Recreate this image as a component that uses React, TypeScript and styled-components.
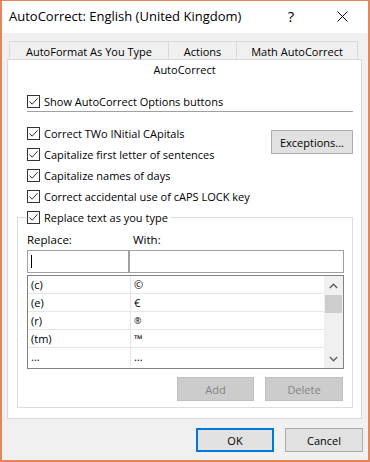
import React from 'react';
import styled, { createGlobalStyle } from 'styled-components';

const GlobalStyle = createGlobalStyle`
  html, body {
    margin: 0;
    padding: 0;
    background: #f0f0f0;
  }
  body {
    font-family: "Open Sans", "Noto Sans", sans-serif;
    font-size: 11px;
    color: #000;
  }
`;

const options = [
  'Correct TWo INitial CApitals',
  'Capitalize first letter of sentences',
  'Capitalize names of days',
  'Correct accidental use of cAPS LOCK key',
];

const entries: [string, string, boolean?][] = [
  ['(c)', '©'],
  ['(e)', '€'],
  ['(r)', '®', true],
  ['(tm)', '™'],
  ['...', '…'],
];

const CheckBox: React.FC<{ label: string }> = ({ label }) => (
  <CheckRow>
    <Box>
      <svg width="11" height="11" viewBox="0 0 11 11">
        <path d="M1.5 5.5 L4.2 8.2 L9.6 2.2" fill="none" stroke="#333" strokeWidth="1" />
      </svg>
    </Box>
    <span>{label}</span>
  </CheckRow>
);

const App: React.FC = () => {
  return (
    <>
      <GlobalStyle />
      <Window>
        <TitleBar>
          <Title>AutoCorrect: English (United Kingdom)</Title>
          <HelpButton>?</HelpButton>
          <CloseButton>
            <svg width="11" height="11" viewBox="0 0 11 11">
              <path d="M0.5 0.5 L10.5 10.5 M10.5 0.5 L0.5 10.5" stroke="#000" strokeWidth="1" />
            </svg>
          </CloseButton>
        </TitleBar>

        <Body>
          <TabStrip>
            <Tab width={160}>AutoFormat As You Type</Tab>
            <Tab width={68}>Actions</Tab>
            <Tab width={121}>Math AutoCorrect</Tab>
          </TabStrip>

          <TabPage>
            <ActiveTab>AutoCorrect</ActiveTab>

            <Options>
              <CheckBox label="Show AutoCorrect Options buttons" />
              <Separator />
              <OptionGrid>
                <div>
                  {options.map(o => (
                    <CheckBox key={o} label={o} />
                  ))}
                </div>
                <ExceptionsButton>Exceptions...</ExceptionsButton>
              </OptionGrid>
            </Options>

            <GroupBox>
              <Legend>
                <CheckBox label="Replace text as you type" />
              </Legend>
              <LabelRow>
                <FieldLabel width={106}>Replace:</FieldLabel>
                <FieldLabel>With:</FieldLabel>
              </LabelRow>
              <InputRow>
                <TextInput width={102}>
                  <Caret />
                </TextInput>
                <TextInput width={215} />
              </InputRow>

              <ListBox>
                <ListRows>
                  {entries.map(([from, to, small], i) => (
                    <ListRow key={from} last={i === entries.length - 1}>
                      <Cell>{from}</Cell>
                      <Cell divider small={small}>{to}</Cell>
                    </ListRow>
                  ))}
                </ListRows>
                <ScrollBar>
                  <ScrollArrow>
                    <svg width="9" height="6" viewBox="0 0 9 6">
                      <path d="M0.8 5 L4.5 1.3 L8.2 5" fill="none" stroke="#606060" strokeWidth="1.4" />
                    </svg>
                  </ScrollArrow>
                  <Thumb />
                  <ScrollTrack />
                  <ScrollArrow>
                    <svg width="9" height="6" viewBox="0 0 9 6">
                      <path d="M0.8 1 L4.5 4.7 L8.2 1" fill="none" stroke="#606060" strokeWidth="1.4" />
                    </svg>
                  </ScrollArrow>
                </ScrollBar>
              </ListBox>

              <ListButtons>
                <Button width={77} disabled>Add</Button>
                <Button width={78} disabled>Delete</Button>
              </ListButtons>
            </GroupBox>
          </TabPage>

          <Footer>
            <Button width={78} primary>OK</Button>
            <Button width={78}>Cancel</Button>
          </Footer>
        </Body>
      </Window>
    </>
  );
};

export default App;

const Window = styled.div`
  width: 370px;
  height: 462px;
  box-sizing: border-box;
  border: 2px solid #e3865a;
  border-top-width: 1px;
  background: #f0f0f0;
  display: flex;
  flex-direction: column;
`;

const TitleBar = styled.div`
  height: 32px;
  background: #fff;
  display: flex;
  align-items: center;
  padding-left: 7px;
  flex-shrink: 0;
`;

const Title = styled.div`
  flex: 1;
  font-size: 13px;
  padding-bottom: 2px;
`;

const HelpButton = styled.div`
  width: 50px;
  text-align: center;
  font-size: 15px;
  padding-bottom: 2px;
`;

const CloseButton = styled.div`
  width: 52px;
  display: flex;
  justify-content: center;
  align-items: center;
  padding-bottom: 1px;
`;

const Body = styled.div`
  flex: 1;
  padding: 8px 6px 0 5px;
  display: flex;
  flex-direction: column;
`;

const TabStrip = styled.div`
  display: flex;
  margin-left: 2px;
  height: 19px;
  flex-shrink: 0;
`;

const Tab = styled.div<{ width: number }>`
  width: ${props => props.width}px;
  box-sizing: border-box;
  border: 1px solid #d9d9d9;
  border-bottom: none;
  border-left-width: 0;
  &:first-child {
    border-left-width: 1px;
  }
  background: #f0f0f0;
  text-align: center;
  line-height: 19px;
`;

const TabPage = styled.div`
  width: 355px;
  box-sizing: border-box;
  background: #fff;
  border: 1px solid #d9d9d9;
  padding: 0 8px 10px 9px;
  margin-top: -1px;
  flex-shrink: 0;
`;

const ActiveTab = styled.div`
  height: 20px;
  line-height: 20px;
  text-align: center;
  margin-left: -9px;
  margin-right: -8px;
`;

const Options = styled.div`
  padding: 11px 0 0 10px;
`;

const CheckRow = styled.div`
  display: flex;
  align-items: center;
  height: 21px;
  gap: 4px;
  white-space: nowrap;
`;

const Box = styled.div`
  width: 13px;
  height: 13px;
  box-sizing: border-box;
  border: 1px solid #333;
  background: #fff;
  display: flex;
  align-items: center;
  justify-content: center;
  flex-shrink: 0;
`;

const Separator = styled.div`
  height: 1px;
  background: #a0a0a0;
  margin: -1px 0 11px;
`;

const OptionGrid = styled.div`
  display: flex;
  justify-content: space-between;
  align-items: flex-start;
`;

const Button = styled.div<{ width: number; primary?: boolean; disabled?: boolean }>`
  width: ${props => props.width}px;
  height: 24px;
  box-sizing: border-box;
  display: flex;
  align-items: center;
  justify-content: center;
  background: ${props => (props.disabled ? '#cccccc' : '#e1e1e1')};
  border: ${props =>
    props.primary ? '2px solid #0078d7' : props.disabled ? '1px solid #bfbfbf' : '1px solid #adadad'};
  color: ${props => (props.disabled ? '#838383' : '#000')};
`;

const ExceptionsButton = styled(Button).attrs({ width: 82 })`
  margin-top: 7px;
`;

const GroupBox = styled.fieldset`
  margin: 0;
  width: 336px;
  box-sizing: border-box;
  border: 1px solid #dcdcdc;
  padding: 0 8px 6px 9px;
`;

const Legend = styled.legend`
  padding: 0 2px;
  margin-left: -2px;
`;

const LabelRow = styled.div`
  display: flex;
  height: 18px;
  line-height: 18px;
  margin-top: 3px;
`;

const FieldLabel = styled.div<{ width?: number }>`
  width: ${props => (props.width ? `${props.width}px` : 'auto')};
  font-size: 11.5px;
`;

const InputRow = styled.div`
  display: flex;
  margin-top: 1px;
`;

const TextInput = styled.div<{ width: number }>`
  width: ${props => props.width}px;
  height: 23px;
  box-sizing: border-box;
  border: 1px solid #a0a0a0;
  background: #fff;
  display: flex;
  align-items: center;
  padding-left: 3px;
`;

const Caret = styled.div`
  width: 1px;
  height: 13px;
  background: #000;
`;

const ListBox = styled.div`
  margin-top: 2px;
  height: 94px;
  box-sizing: border-box;
  border: 1px solid #828282;
  display: flex;
  background: #fff;
`;

const ListRows = styled.div`
  flex: 1;
  display: flex;
  flex-direction: column;
`;

const ListRow = styled.div<{ last?: boolean }>`
  display: grid;
  grid-template-columns: 102px 1fr;
  height: 18px;
  box-sizing: border-box;
  border-bottom: ${props => (props.last ? 'none' : '1px solid #e6e6e6')};
`;

const Cell = styled.div<{ divider?: boolean; small?: boolean }>`
  padding-left: 3px;
  line-height: 17px;
  font-size: ${props => (props.small ? '9px' : '11px')};
  border-left: ${props => (props.divider ? '1px solid #e6e6e6' : 'none')};
`;

const ScrollBar = styled.div`
  width: 19px;
  background: #f0f0f0;
  display: flex;
  flex-direction: column;
`;

const ScrollArrow = styled.div`
  height: 19px;
  display: flex;
  align-items: center;
  justify-content: center;
`;

const Thumb = styled.div`
  height: 18px;
  margin: 0 1px;
  background: #cdcdcd;
`;

const ScrollTrack = styled.div`
  flex: 1;
`;

const ListButtons = styled.div`
  display: flex;
  justify-content: flex-end;
  gap: 11px;
  margin: 8px 1px 0 0;
`;

const Footer = styled.div`
  display: flex;
  justify-content: flex-end;
  gap: 11px;
  padding: 9px 0 0;
  margin-right: -1px;
`;
